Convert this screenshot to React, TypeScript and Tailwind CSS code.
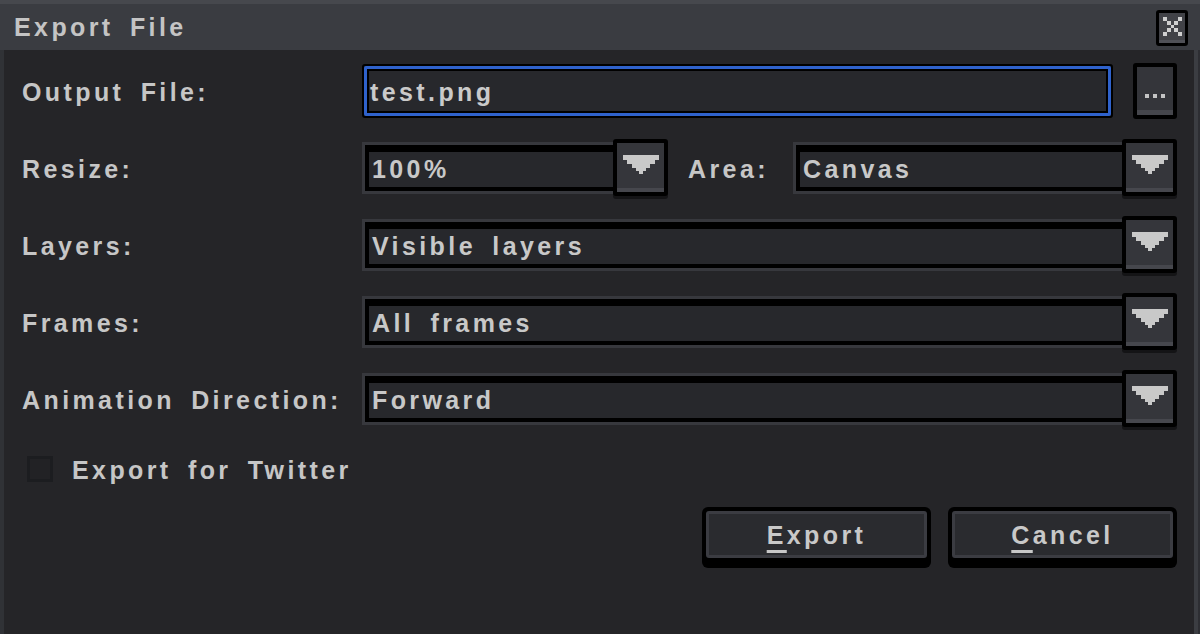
import React from 'react';

const font = { fontFamily: '"Liberation Sans", Arial, sans-serif', wordSpacing: '6px' };

function Triangle() {
  // stepped pixel-art arrow
  return (
    <svg width="36" height="19" viewBox="0 0 36 19" shapeRendering="crispEdges">
      <path
        d="M0 0H36V5H32V9H27V13H23V16H20V19H16V16H13V13H9V9H4V5H0Z"
        fill="#c9c9c9"
      />
    </svg>
  );
}

function CloseX() {
  const cells = [
    [0, 0], [4, 0], [1, 1], [3, 1], [2, 2], [1, 3], [3, 3], [0, 4], [4, 4],
  ];
  return (
    <svg width="19" height="19" viewBox="0 0 5 5" shapeRendering="crispEdges">
      {cells.map(([x, y]) => (
        <rect key={`${x}-${y}`} x={x} y={y} width="1" height="1" fill="#cfcfcf" />
      ))}
    </svg>
  );
}

function Field({ value }: { value: string }) {
  return (
    <div className="flex-1 h-[52px] border-[3px] border-[#37383d] border-r-0">
      <div className="h-full border-[4px] border-t-[7px] border-r-0 border-black bg-[#27282c] flex items-center pl-[3px] pt-[1px]">
        <span className="text-[#c8c8c8]">{value}</span>
      </div>
    </div>
  );
}

function DropButton() {
  return (
    <div className="w-[55px] h-[57px] shrink-0 border-[4px] border-black rounded-[3px] bg-[#35363b] shadow-[0_3px_0_0_#141416] flex flex-col">
      <div className="flex-1 flex items-center justify-center pb-[2px]">
        <Triangle />
      </div>
      <div className="h-[4px] bg-[#46474d]" />
    </div>
  );
}

function Combo({ value }: { value: string }) {
  return (
    <div className="flex-1 flex items-center h-[57px]">
      <Field value={value} />
      <DropButton />
    </div>
  );
}

function Row({ label, children }: { label: string; children: React.ReactNode }) {
  return (
    <div className="flex items-center h-[57px]">
      <div className="w-[340px] shrink-0 pt-[4px] text-[#c6c6c6]">{label}</div>
      {children}
    </div>
  );
}

function DialogButton({ label }: { label: string }) {
  return (
    <div className="w-[229px] h-[61px] rounded-[6px] bg-black p-[4px] pb-[10px]">
      <div className="h-full rounded-[3px] border-[3px] border-[#3b3c42] bg-[#2a2b2f] flex items-center justify-center pt-[2px] text-[#c8c8c8]">
        <span>
          <span className="underline decoration-[3px] underline-offset-[6px]">{label[0]}</span>
          {label.slice(1)}
        </span>
      </div>
    </div>
  );
}

export default function App() {
  return (
    <div
      className="w-[1200px] h-[634px] bg-[#252528] flex flex-col overflow-hidden text-[25px] font-bold tracking-[3.4px] leading-none"
      style={font}
    >
      {/* Title bar */}
      <div className="h-[50px] shrink-0 border-t-4 border-[#46484d] bg-[#3a3c41] flex items-center justify-between pl-[14px] pr-[12px]">
        <span className="text-[#c4c4c4]">Export File</span>
        <div className="w-[32px] h-[36px] mt-[2px] border-[3px] border-black rounded-[3px] bg-[#414247] flex flex-col">
          <div className="flex-1 flex items-center justify-center">
            <CloseX />
          </div>
          <div className="h-[3px] bg-[#505157]" />
        </div>
      </div>

      <div className="flex-1 flex">
        <div className="w-[4px] bg-[#303236]" />
        <div className="flex-1 pl-[18px] pr-[17px] pt-[12px] flex flex-col gap-[20px]">
          {/* Output file */}
          <Row label="Output File:">
            <div className="flex-1 h-[54px] rounded-[3px] border-2 border-black">
              <div className="h-full rounded-[2px] border-[3px] border-[#2f62cc]">
                <div className="h-full border-2 border-black bg-[#27282c] flex items-center pl-[1px] pt-[3px]">
                  <span className="text-[#cacaca]">test.png</span>
                </div>
              </div>
            </div>
            <div className="w-[44px] h-[56px] ml-[20px] shrink-0 border-[4px] border-black rounded-[3px] bg-[#34353a] flex flex-col">
              <div className="flex-1 flex items-center justify-center gap-[4px] pt-[16px]">
                <div className="w-[4px] h-[4px] bg-[#c4c4c4]" />
                <div className="w-[4px] h-[4px] bg-[#c4c4c4]" />
                <div className="w-[4px] h-[4px] bg-[#c4c4c4]" />
              </div>
              <div className="h-[5px] bg-[#45464c]" />
            </div>
          </Row>

          {/* Resize / Area */}
          <div className="flex items-center h-[57px]">
            <div className="w-[340px] shrink-0 pt-[4px] text-[#c6c6c6]">Resize:</div>
            <div className="w-[306px] shrink-0 flex items-center h-[57px]">
              <Field value="100%" />
              <DropButton />
            </div>
            <div className="w-[125px] shrink-0 pl-[20px] pt-[4px] text-[#c6c6c6]">Area:</div>
            <Combo value="Canvas" />
          </div>

          <Row label="Layers:">
            <Combo value="Visible layers" />
          </Row>
          <Row label="Frames:">
            <Combo value="All frames" />
          </Row>
          <Row label="Animation Direction:">
            <Combo value="Forward" />
          </Row>

          {/* Checkbox */}
          <div className="flex items-center h-[44px] pl-[5px]">
            <div className="w-[26px] h-[26px] border-[3px] border-[#1c1d20] bg-[#222225]" />
            <span className="ml-[19px] pt-[3px] text-[#c6c6c6]">Export for Twitter</span>
          </div>

          {/* Buttons */}
          <div className="flex justify-end gap-[17px] -mt-[4px]">
            <DialogButton label="Export" />
            <DialogButton label="Cancel" />
          </div>
        </div>
        <div className="w-[4px] bg-[#3b3d42]" />
        <div className="w-[2px] bg-[#2d2e33]" />
      </div>
    </div>
  );
}
